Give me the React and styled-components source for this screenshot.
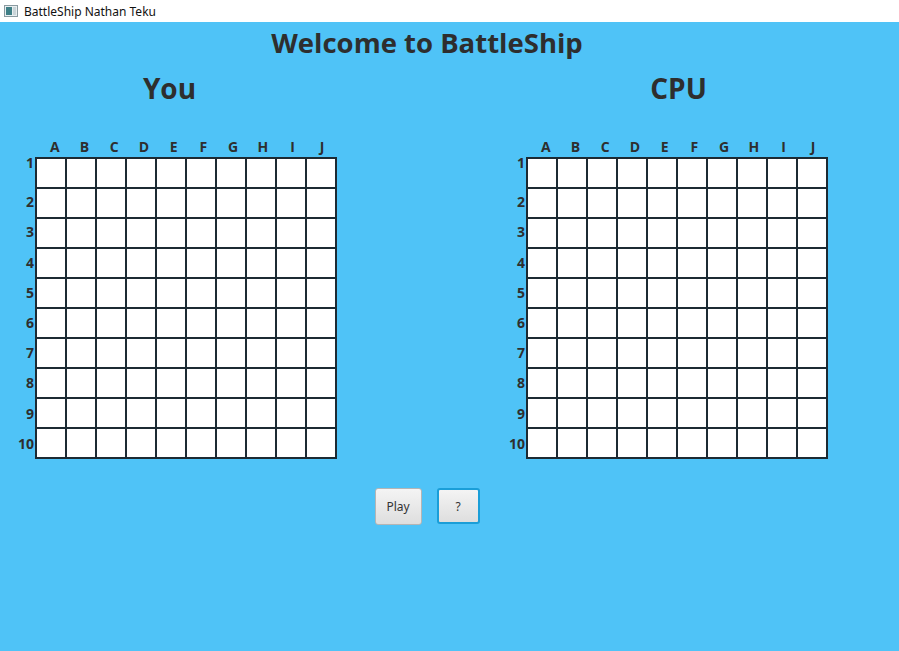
import React from "react";
import styled, { createGlobalStyle } from "styled-components";

const GlobalStyle = createGlobalStyle`
  body {
    margin: 0;
    background: #4fc3f7;
    font-family: "Open Sans", "Noto Sans", sans-serif;
  }
`;

const Window = styled.div`
  width: 899px;
  height: 651px;
  background: #4fc3f7;
  overflow: hidden;
`;

const TitleBar = styled.div`
  height: 22px;
  background: #ffffff;
  display: flex;
  align-items: center;
  gap: 6px;
  padding-left: 4px;
  font-family: "Noto Sans", sans-serif;
  font-size: 12px;
  color: #111;
`;

const Content = styled.div`
  width: 854px;
  display: flex;
  flex-direction: column;
`;

const Title = styled.h1`
  margin: 2px 0 0;
  height: 38px;
  line-height: 38px;
  text-align: center;
  font-size: 27.5px;
  font-weight: 700;
  color: #2e2e2e;
`;

const Boards = styled.div`
  display: flex;
  gap: 172px;
  padding-left: 18px;
`;

const Board = styled.div`
  display: flex;
  flex-direction: column;
`;

const Heading = styled.h2`
  margin: 7px 0 0;
  height: 38px;
  line-height: 38px;
  text-align: center;
  font-size: 28px;
  font-weight: 700;
  color: #2e2e2e;
  padding-left: ${(p) => (p.$shift > 0 ? p.$shift * 2 : 0)}px;
  padding-right: ${(p) => (p.$shift < 0 ? -p.$shift * 2 : 0)}px;
`;

const Layout = styled.div`
  display: grid;
  grid-template-columns: 17px 302px;
  grid-template-rows: 16px 302px;
  margin-top: 34px;
`;

const ColLabels = styled.div`
  grid-column: 2;
  display: grid;
  grid-template-columns: repeat(10, 1fr);
  padding-left: 5px;
  margin-top: -2px;
`;

const Label = styled.span`
  font-size: 14px;
  font-weight: 700;
  color: #2e2e2e;
  line-height: 16px;
  text-align: center;
`;

const RowLabels = styled.div`
  grid-column: 1;
  display: grid;
  grid-template-rows: repeat(10, 1fr);
`;

const RowLabel = styled(Label)`
  text-align: right;
  align-self: ${(p) => (p.$top ? "start" : "center")};
  margin-top: ${(p) => (p.$top ? "-2px" : "0")};
  padding-right: 1px;
`;

const Grid = styled.div`
  display: grid;
  grid-template-columns: repeat(10, 1fr);
  grid-template-rows: repeat(10, 1fr);
  border: 1px solid #1c2a33;
`;

const Cell = styled.div`
  background: #ffffff;
  border: 1px solid #1c2a33;
`;

const Actions = styled.div`
  display: flex;
  justify-content: center;
  align-items: flex-start;
  gap: 15px;
  margin-top: 29px;
`;

const Button = styled.button`
  width: ${(p) => p.$w}px;
  height: ${(p) => (p.$focused ? 36 : 37)}px;
  border: ${(p) => (p.$focused ? "2px solid #1a9ed8" : "1px solid #b5b5b5")};
  border-radius: 3px;
  background: linear-gradient(#f4f4f4, #dedede);
  font-family: "Noto Sans", sans-serif;
  font-size: 12px;
  color: #333;
  padding: 0;
`;

const letters = ["A", "B", "C", "D", "E", "F", "G", "H", "I", "J"];

const AppIcon = () => (
  <svg width="14" height="12" viewBox="0 0 14 12">
    <rect x="0.5" y="0.5" width="13" height="11" fill="#e8eef0" stroke="#8a9aa0" />
    <rect x="2" y="2" width="6" height="8" fill="#3f7f86" />
    <rect x="9" y="2" width="3" height="8" fill="#c9d4d8" />
  </svg>
);

const GameBoard = ({ name, shift }) => (
  <Board>
    <Heading $shift={shift}>{name}</Heading>
    <Layout>
      <ColLabels>
        {letters.map((l) => (
          <Label key={l}>{l}</Label>
        ))}
      </ColLabels>
      <RowLabels>
        {letters.map((_, i) => (
          <RowLabel key={i} $top={i === 0}>
            {i + 1}
          </RowLabel>
        ))}
      </RowLabels>
      <Grid>
        {Array.from({ length: 100 }, (_, i) => (
          <Cell key={i} />
        ))}
      </Grid>
    </Layout>
  </Board>
);

export default function App() {
  return (
    <Window>
      <GlobalStyle />
      <TitleBar>
        <AppIcon />
        BattleShip Nathan Teku
      </TitleBar>
      <Content>
        <Title>Welcome to BattleShip</Title>
        <Boards>
          <GameBoard name="You" shift={-8} />
          <GameBoard name="CPU" shift={10} />
        </Boards>
        <Actions>
          <Button $w={47}>Play</Button>
          <Button $w={43} $focused>
            ?
          </Button>
        </Actions>
      </Content>
    </Window>
  );
}
